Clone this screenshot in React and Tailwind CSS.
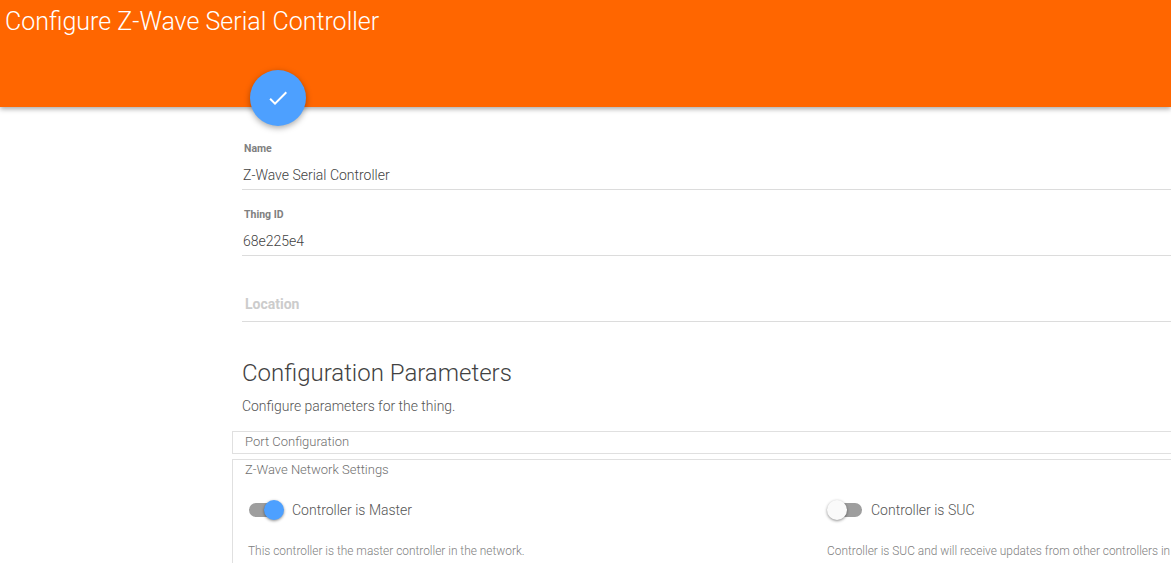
import React from "react";
import { MdCheck } from "react-icons/md";

const font = { fontFamily: "Roboto, sans-serif" };

function Field({ label, value }) {
  return (
    <div className="h-[66px] border-b border-[#dcdcdc] pl-[2px]">
      <div className="h-[41px] pt-[19px] text-[10.5px] leading-[12px] font-bold text-[#808080]">{label}</div>
      <div className="-ml-px text-[14px] leading-[20px] font-light text-[#424242]">{value}</div>
    </div>
  );
}

function Toggle({ on, label, desc }) {
  return (
    <div>
      <div className="flex items-center h-[24px] pl-[1px]">
        <div className="relative w-[34px] h-[14px] rounded-full bg-[#9e9e9e]">
          <div
            className={`absolute top-[-3px] w-[20px] h-[20px] rounded-full shadow-[0_1px_3px_rgba(0,0,0,0.45)] ${
              on ? "right-[-1px] bg-[#4da0ff]" : "left-[-1px] bg-[#fafafa]"
            }`}
          />
        </div>
        <span className="ml-[9px] text-[14px] font-light text-[#555555]">{label}</span>
      </div>
      <p className="mt-[21px] text-[11.9px] leading-[16px] font-light text-[#808080] whitespace-nowrap">{desc}</p>
    </div>
  );
}

export default function App() {
  return (
    <div className="relative w-[1171px] h-[563px] overflow-hidden bg-white" style={font}>
      {/* Header */}
      <header className="h-[107px] bg-[#ff6600] shadow-[0_2px_5px_rgba(0,0,0,0.35)] pl-[5px] pt-[6px]">
        <h1 className="text-[25px] leading-[32px] font-light text-white">Configure Z-Wave Serial Controller</h1>
      </header>

      {/* Save button */}
      <button className="absolute left-[250px] top-[70px] w-[56px] h-[56px] rounded-full bg-[#4da0ff] flex items-center justify-center shadow-[0_2px_6px_rgba(0,0,0,0.35)]">
        <MdCheck size={24} color="#fff" />
      </button>

      <main className="pl-[242px] pt-[17px]">
        <Field label="Name" value="Z-Wave Serial Controller" />
        <Field label="Thing ID" value="68e225e4" />
        <div className="h-[66px] border-b border-[#dcdcdc] pl-[3px] pt-[40px] text-[14px] leading-[16px] font-bold text-[#cccccc]">
          Location
        </div>

        <h2 className="mt-[35px] text-[24px] leading-[32px] font-light text-[#424242]">Configuration Parameters</h2>
        <p className="mt-[9px] text-[13.95px] leading-[16px] font-light text-[#555555]">Configure parameters for the thing.</p>

        <div className="mt-[17px] -ml-[10px]">
          <div className="h-[23px] border border-r-0 border-[#e0e0e0] pl-[12px] text-[13px] leading-[19px] font-light text-[#707070]">
            Port Configuration
          </div>
          <div className="mt-[5px] border-l border-t border-[#e0e0e0] h-[120px]">
            <div className="pl-[12px] text-[13px] leading-[19px] font-light text-[#707070]">Z-Wave Network Settings</div>
            <div className="flex mt-[19px] pl-[15px]">
              <div className="w-[579px] shrink-0">
                <Toggle on label="Controller is Master" desc="This controller is the master controller in the network." />
              </div>
              <div className="shrink-0">
                <Toggle label="Controller is SUC" desc="Controller is SUC and will receive updates from other controllers in" />
              </div>
            </div>
          </div>
        </div>
      </main>
    </div>
  );
}
